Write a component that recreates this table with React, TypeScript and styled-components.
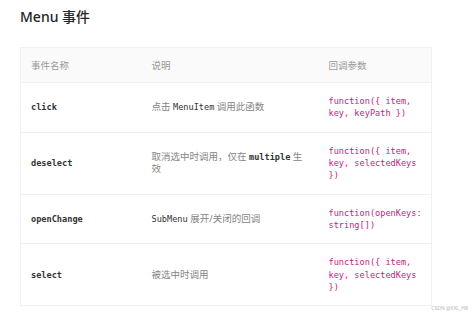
import styled, { createGlobalStyle } from 'styled-components'

const GlobalStyle = createGlobalStyle`
  html, body {
    margin: 0;
    padding: 0;
    background: #fff;
  }
  body {
    font-family: 'Noto Sans', 'Noto Sans CJK SC', sans-serif;
  }
`

const Page = styled.div`
  position: relative;
  width: 474px;
  height: 314px;
  padding: 7px 20px 0 20px;
  box-sizing: border-box;
  overflow: hidden;
`

const Title = styled.h2`
  margin: 0 0 20px;
  font-size: 14px;
  line-height: 20px;
  font-weight: 500;
  color: #262626;
`

const Table = styled.table`
  width: 411px;
  border-collapse: collapse;
  table-layout: fixed;
  border: 1px solid #f0f0f0;
`

const HeadCell = styled.th<{ $w: number }>`
  width: ${(p) => p.$w}px;
  height: 35px;
  padding: 0 10px;
  box-sizing: border-box;
  background: #fafafa;
  text-align: left;
  font-weight: 400;
  font-size: 9.5px;
  color: #999;
  border-bottom: 1px solid #f0f0f0;
`

const Row = styled.tr`
  border-bottom: 1px solid #f0f0f0;
`

const Cell = styled.td`
  padding: 12px 10px;
  vertical-align: middle;
  font-size: 9.5px;
  line-height: 12.3px;
  color: #858585;
`

const Name = styled.code`
  font-family: 'DejaVu Sans Mono', 'Liberation Mono', monospace;
  font-size: 8.6px;
  font-weight: bold;
  color: #333;
`

const Inline = styled.code<{ $bold?: boolean }>`
  font-family: 'DejaVu Sans Mono', 'Liberation Mono', monospace;
  font-size: 8.6px;
  font-weight: ${(p) => (p.$bold ? 'bold' : 'normal')};
  color: #333;
`

const Sig = styled.code`
  display: block;
  font-family: 'DejaVu Sans Mono', 'Liberation Mono', monospace;
  font-size: 8.6px;
  line-height: 12.3px;
  color: #c41d7f;
  white-space: pre-wrap;
`

const Mark = styled.div`
  position: absolute;
  right: 6px;
  bottom: 3px;
  font-size: 5px;
  color: #b5b5b5;
`

const events = [
  {
    name: 'click',
    desc: (
      <>
        点击 <Inline>MenuItem</Inline> 调用此函数
      </>
    ),
    sig: 'function({ item,\nkey, keyPath })',
    h: 49,
  },
  {
    name: 'deselect',
    desc: (
      <>
        取消选中时调用，仅在 <Inline $bold>multiple</Inline> 生效
      </>
    ),
    sig: 'function({ item,\nkey, selectedKeys\n})',
    h: 62,
  },
  {
    name: 'openChange',
    desc: (
      <>
        <Inline>SubMenu</Inline> 展开/关闭的回调
      </>
    ),
    sig: 'function(openKeys:\nstring[])',
    h: 48,
  },
  {
    name: 'select',
    desc: <>被选中时调用</>,
    sig: 'function({ item,\nkey, selectedKeys\n})',
    h: 62,
  },
]

export default function App() {
  return (
    <Page>
      <GlobalStyle />
      <Title>Menu 事件</Title>
      <Table>
        <thead>
          <tr>
            <HeadCell $w={121}>事件名称</HeadCell>
            <HeadCell $w={177}>说明</HeadCell>
            <HeadCell $w={113}>回调参数</HeadCell>
          </tr>
        </thead>
        <tbody>
          {events.map((e) => (
            <Row key={e.name} style={{ height: e.h }}>
              <Cell>
                <Name>{e.name}</Name>
              </Cell>
              <Cell>{e.desc}</Cell>
              <Cell>
                <Sig>{e.sig}</Sig>
              </Cell>
            </Row>
          ))}
        </tbody>
      </Table>
      <Mark>CSDN @XXL_HR</Mark>
    </Page>
  )
}
